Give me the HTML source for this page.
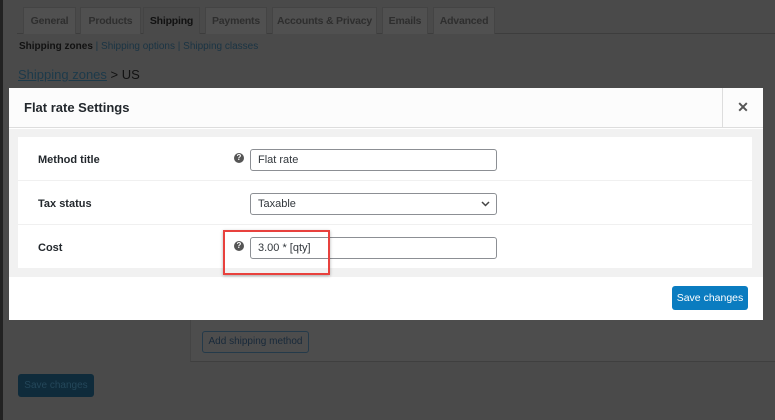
<!DOCTYPE html>
<html><head><style>
*{box-sizing:border-box;margin:0;padding:0}
body{width:775px;height:420px;overflow:hidden;background:#4a4a4a;font-family:"Liberation Sans",sans-serif;position:relative}
.abs{position:absolute}
.strip{left:0;top:0;width:3px;height:420px;background:#222}
.tabline{left:17px;top:33px;width:758px;height:1px;background:#3d3d3d}
.tab{top:7px;height:27px;background:#505050;border:1px solid #444;border-bottom:none;color:#2e2e2e;font-size:10.5px;font-weight:bold;line-height:26px;text-align:center;white-space:nowrap;overflow:hidden;letter-spacing:-0.2px}
.tab.act{background:#4a4a4a;color:#111;height:27px}
.sub{left:19px;top:41px;font-size:10px;color:#111;font-weight:bold;white-space:nowrap}
.sub span{font-weight:normal;color:#1a3444}
.bc{left:18px;top:67px;font-size:13px;color:#111}
.bc u{color:#1d3a4a}
.modal{left:9px;top:88px;width:754px;height:232px;background:#fff}
.hd{left:0;top:0;width:754px;height:40px;background:#fcfcfc;border-bottom:1px solid #ddd}
.hd b{position:absolute;left:15px;top:12px;font-size:13px;color:#23282d}
.cls{position:absolute;left:713px;top:0;width:41px;height:40px;border-left:1px solid #ddd;text-align:center;line-height:39px;font-size:14px;color:#555;font-weight:bold}
.body{left:0;top:41px;width:754px;height:148px;background:#f1f1f1}
.card{left:9px;top:8px;width:734px;height:131px;background:#fff}
.row{left:0;width:734px;height:44px;border-bottom:1px solid #f0f0f0}
.lbl{position:absolute;left:20px;top:17px;font-size:11px;color:#23282d;font-weight:bold}
.q{position:absolute;left:216px;top:16px;width:10px;height:10px;border-radius:50%;background:#555;color:#fff;font-size:8px;font-weight:bold;text-align:center;line-height:10px}
.inp{position:absolute;left:232px;top:12px;width:247px;height:22px;border:1px solid #8c8f94;border-radius:3px;font-size:11px;color:#32373c;padding-left:7px;line-height:20px}
.ft{left:0;top:189px;width:754px;height:43px;background:#fff}
.btn{position:absolute;left:663px;top:9px;width:76px;height:24px;background:#0a7cc0;border-radius:3px;color:#fff;font-size:10.5px;text-align:center;line-height:24px;white-space:nowrap}
.red{left:223px;top:230px;width:107px;height:45px;border:2px solid #e8413d;box-shadow:0 1px 3px rgba(0,0,0,.3)}
.panel{left:190px;top:320px;width:585px;height:42px;background:#4d4d4d;border-left:1px solid #444;border-bottom:1px solid #3f3f3f}
.add{left:202px;top:331px;width:107px;height:22px;border:1px solid #243a4a;border-radius:3px;font-size:10px;color:#18293a;text-align:center;line-height:20px;white-space:nowrap}
.sv{left:18px;top:374px;width:76px;height:23px;background:#0f2b3b;border-radius:3px;font-size:10px;color:#24475a;text-align:center;line-height:23px;white-space:nowrap}
</style></head><body>
<div class="abs strip"></div>
<div class="abs tabline"></div>
<div class="abs tab" style="left:23px;width:53px">General</div>
<div class="abs tab" style="left:80px;width:61px">Products</div>
<div class="abs tab act" style="left:143px;width:57px">Shipping</div>
<div class="abs tab" style="left:205px;width:62px">Payments</div>
<div class="abs tab" style="left:272px;width:105px">Accounts &amp; Privacy</div>
<div class="abs tab" style="left:382px;width:46px">Emails</div>
<div class="abs tab" style="left:433px;width:62px">Advanced</div>
<div class="abs sub">Shipping zones <span>| Shipping options | Shipping classes</span></div>
<div class="abs bc"><u>Shipping zones</u> &gt; US</div>
<div class="abs panel"></div>
<div class="abs add">Add shipping method</div>
<div class="abs sv">Save changes</div>
<div class="abs modal">
 <div class="abs hd"><b>Flat rate Settings</b><div class="cls">✕</div></div>
 <div class="abs body">
  <div class="abs card">
   <div class="abs row" style="top:0"><div class="lbl">Method title</div><div class="q">?</div><div class="inp">Flat rate</div></div>
   <div class="abs row" style="top:44px"><div class="lbl">Tax status</div><div class="inp">Taxable<svg style="position:absolute;right:6px;top:7px" width="9" height="6" viewBox="0 0 9 6"><path d="M1 1l3.5 3.5L8 1" stroke="#444" stroke-width="1.5" fill="none"/></svg></div></div>
   <div class="abs row" style="top:88px;border:none"><div class="lbl">Cost</div><div class="q">?</div><div class="inp">3.00 * [qty]</div></div>
  </div>
 </div>
 <div class="abs ft"><div class="btn">Save changes</div></div>
</div>
<div class="abs red"></div>
</body></html>
